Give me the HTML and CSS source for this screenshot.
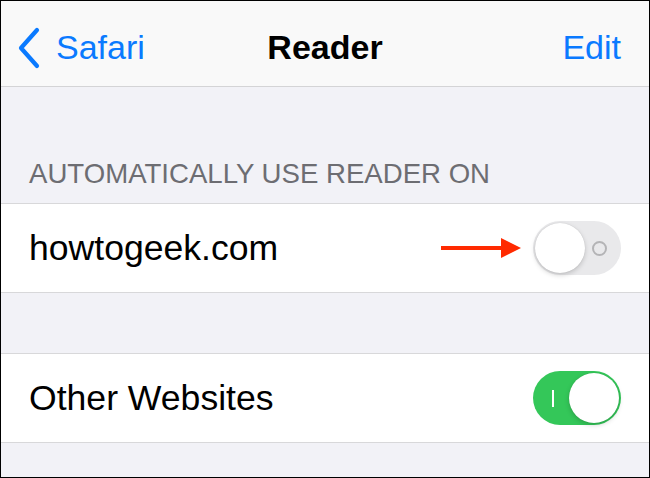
FILE: index.html
```html
<!DOCTYPE html>
<html lang="en">
<head>
<meta charset="UTF-8">
<title>Reader</title>
<link rel="stylesheet" href="styles.css">
</head>
<body>

<div class="screen">

<nav class="navbar">
<div class="back">
<svg class="chevron" width="26" height="42" viewBox="0 0 26 42"><path d="M21 3 L5 21 L21 39" fill="none" stroke="#0a7aff" stroke-width="4.2" stroke-linecap="round" stroke-linejoin="round"/></svg>
<span>Safari</span>
</div>
<div class="title">Reader</div>
<div class="edit">Edit</div>
</nav>

<div class="group-header">AUTOMATICALLY USE READER ON</div>

<div class="group">
<div class="row">
<span class="label">howtogeek.com</span>
<svg class="arrow" width="80" height="20" viewBox="0 0 80 20"><rect x="0" y="8" width="62" height="4" fill="#ff2a00"/><polygon points="60,0 80,10 60,20" fill="#ff2a00"/></svg>
<div class="switch">
<span class="knob"></span>
<span class="off-mark"></span>
</div>
</div>
</div>

<div class="spacer"></div>

<div class="group">
<div class="row">
<span class="label">Other Websites</span>
<div class="switch on">
<span class="on-mark"></span>
<span class="knob"></span>
</div>
</div>
</div>

</div>

</body>
</html>
```

FILE: styles.css
```css
/* ---------- GLOBAL ---------- */
*{margin:0;padding:0;box-sizing:border-box;}
body{font-family:'Liberation Sans',Arial,sans-serif;background:#000;}

.screen{
width:650px;
height:478px;
border:1px solid #000;
background:#f2f2f7;
overflow:hidden;
}

/* ---------- NAVBAR ---------- */
.navbar{
height:86px;
background:#f9f9f9;
border-bottom:1px solid #d4d4d6;
display:flex;
justify-content:space-between;
align-items:flex-start;
padding:27px 28px 0 15px;
font-size:34px;
color:#0a7aff;
position:relative;
}
.back{display:flex;align-items:flex-start;gap:14px;}
.chevron{display:block;margin-top:-1px;}
.back span{line-height:38px;}
.title{
position:absolute;
left:0;right:0;
top:27px;
text-align:center;
font-weight:700;
color:#000;
line-height:38px;
}
.edit{line-height:38px;}

/* ---------- LIST ---------- */
.group-header{
height:116px;
display:flex;
align-items:flex-end;
padding:0 28px 13px;
font-size:27.6px;
line-height:32px;
color:#6d6d72;
}
.group{
background:#fff;
border-top:1px solid #d8d8da;
border-bottom:1px solid #d8d8da;
}
.row{
height:88px;
display:flex;
align-items:center;
padding:0 28px 0 28px;
font-size:35.6px;
color:#000;
}
.label{flex:1;}
.arrow{display:block;margin-right:12px;}
.spacer{height:60px;}

/* ---------- SWITCH ---------- */
.switch{
width:88px;
height:54px;
border-radius:27px;
background:#e9e9eb;
display:flex;
align-items:center;
justify-content:space-between;
padding:0 2px;
}
.knob{
width:50px;
height:50px;
border-radius:50%;
background:#fff;
box-shadow:0 2px 5px rgba(0,0,0,0.18),0 0 1px rgba(0,0,0,0.15);
}
.off-mark{
width:15px;
height:15px;
border-radius:50%;
border:2px solid #b4b4b6;
margin-right:12px;
}
.switch.on{background:#34c759;}
.on-mark{
width:2px;
height:17px;
background:#fff;
margin-left:17px;
}
```
